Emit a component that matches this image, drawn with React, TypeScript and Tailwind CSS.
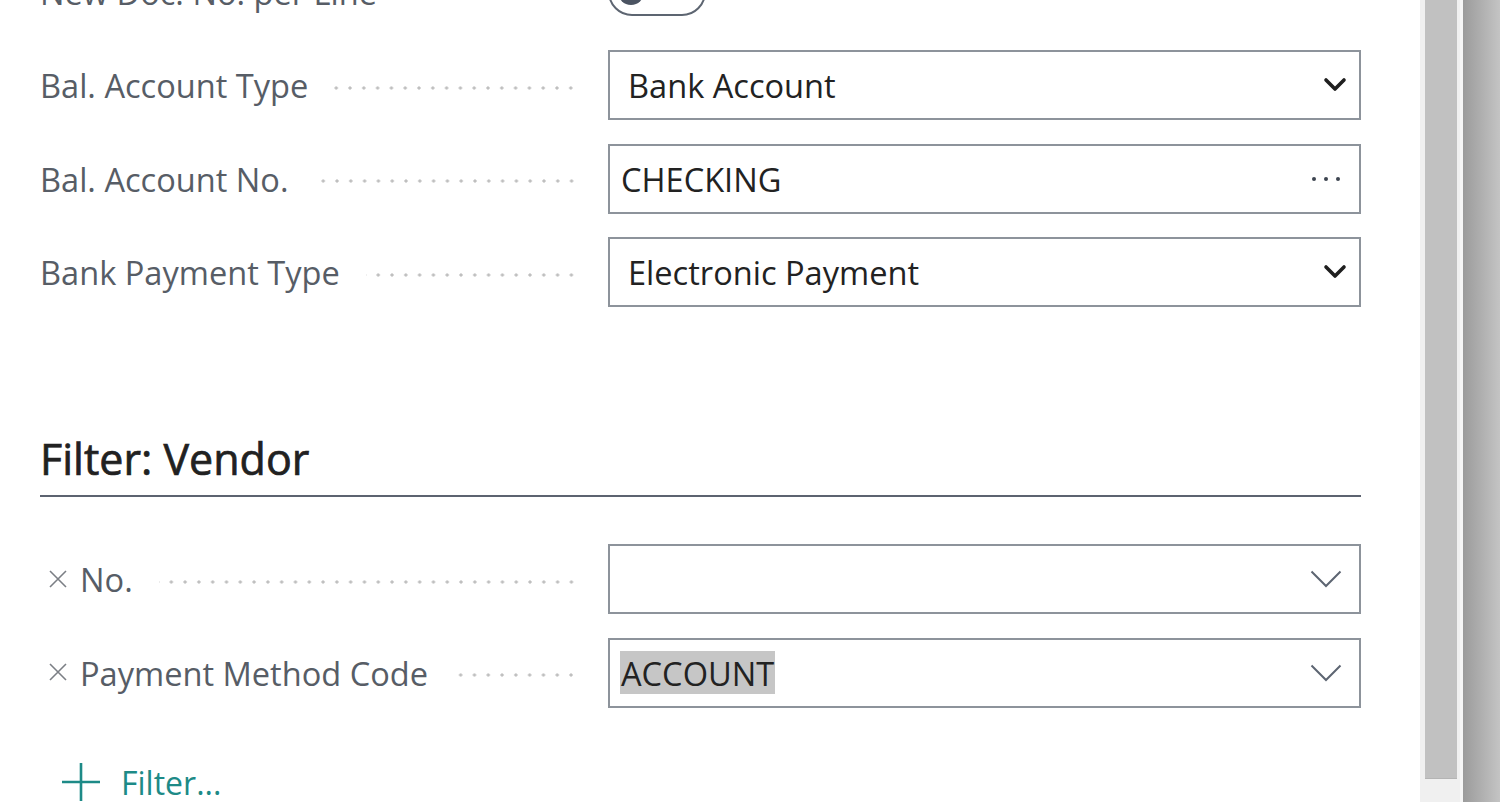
import React from "react";

function Leader() {
  return (
    <div className="ml-[26px] mt-[6px] h-[4px] flex-1 bg-[radial-gradient(circle,#bfbfbf_1.4px,transparent_1.8px)] bg-[length:13.8px_4px] bg-[position:right_center] bg-repeat-x" />
  );
}

function XIcon() {
  return (
    <span className="flex w-[40px] shrink-0 items-center pl-[8px]">
      <svg width="20" height="20" viewBox="0 0 20 20">
        <path d="M2 2 L18 18 M18 2 L2 18" stroke="#7b7f85" strokeWidth="1.6" fill="none" />
      </svg>
    </span>
  );
}

function Row({
  label,
  x,
  children,
}: {
  label: string;
  x?: boolean;
  children: React.ReactNode;
}) {
  return (
    <div className="flex h-[70px] items-center">
      <div className="flex w-[538px] items-center">
        {x && <XIcon />}
        <span className="whitespace-nowrap pt-[3px] text-[32.6px] text-[#575d66]">{label}</span>
        <Leader />
      </div>
      <div className="ml-[30px] flex h-full flex-1 items-center">{children}</div>
    </div>
  );
}

function BoldChevron() {
  return (
    <svg width="24" height="16" viewBox="0 0 24 16" className="mr-[12px] shrink-0">
      <polyline points="3,3 12,12 21,3" stroke="#1f1f1f" strokeWidth="3.6" fill="none" strokeLinecap="round" strokeLinejoin="round" />
    </svg>
  );
}

function ThinChevron() {
  return (
    <svg width="32" height="18" viewBox="0 0 32 18" className="mr-[17px] shrink-0">
      <polyline points="1.5,1.5 16,16 30.5,1.5" stroke="#5d6572" strokeWidth="2" fill="none" />
    </svg>
  );
}

function Box({ children, className = "" }: { children: React.ReactNode; className?: string }) {
  return (
    <div className={"flex h-[70px] w-full items-center justify-between border-2 border-[#8d939b] bg-white " + className}>
      {children}
    </div>
  );
}

export default function App() {
  return (
    <div className="flex h-[802px] w-[1500px] overflow-hidden bg-white font-['Open_Sans',sans-serif]">
      <div className="flex-1 pl-[40px] pr-[59px]">
        <div className="-mt-[43.5px] flex flex-col gap-[23.5px]">
          <Row label="New Doc. No. per Line">
            <div className="flex h-[48px] w-[98px] items-center rounded-full border-[2.5px] border-[#5d6571] px-[8px]">
              <div className="h-[26px] w-[26px] rounded-full bg-[#4b5462]" />
            </div>
          </Row>
          <Row label="Bal. Account Type">
            <Box>
              <span className="pl-[18px] pt-[3px] text-[32.6px] text-[#222]">Bank Account</span>
              <BoldChevron />
            </Box>
          </Row>
          <Row label="Bal. Account No.">
            <Box>
              <span className="pl-[11px] pt-[3px] text-[32.6px] text-[#222]">CHECKING</span>
              <span className="mr-[19px] flex gap-[8px]">
                <span className="h-[4px] w-[4px] rounded-full bg-[#3d4450]" />
                <span className="h-[4px] w-[4px] rounded-full bg-[#3d4450]" />
                <span className="h-[4px] w-[4px] rounded-full bg-[#3d4450]" />
              </span>
            </Box>
          </Row>
          <Row label="Bank Payment Type">
            <Box>
              <span className="pl-[18px] pt-[3px] text-[32.6px] text-[#222]">Electronic Payment</span>
              <BoldChevron />
            </Box>
          </Row>
        </div>

        <div className="mt-[122px] border-b-2 border-[#5c6370] pb-[6px]">
          <h2 className="h-[60px] text-[43px] font-normal leading-[60px] text-[#212121] [-webkit-text-stroke:0.7px_#212121]">Filter: Vendor</h2>
        </div>

        <div className="mt-[47px] flex flex-col gap-[23.5px]">
          <Row label="No." x>
            <Box>
              <span />
              <ThinChevron />
            </Box>
          </Row>
          <Row label="Payment Method Code" x>
            <Box>
              <span className="ml-[10px] bg-[#c6c6c6] px-[1px] pt-[3px] text-[32.6px] leading-[40px] text-[#222]">ACCOUNT</span>
              <ThinChevron />
            </Box>
          </Row>
        </div>

        <div className="mt-[39px] flex h-[70px] items-center pl-[22px] text-[#1d8a87]">
          <svg width="38" height="38" viewBox="0 0 38 38" className="shrink-0">
            <path d="M19 0 V38 M0 19 H38" stroke="#1d8a87" strokeWidth="2.6" fill="none" />
          </svg>
          <span className="ml-[21px] pt-[2px] text-[32px]">Filter...</span>
        </div>
      </div>

      <div className="flex h-full w-[80px] shrink-0">
        <div className="flex w-[40px] flex-col bg-[#f0f0f0] pl-[5px] pr-[3px]">
          <div className="h-[779px] border-b border-[#b4b4b4] bg-[#c1c1c1]" />
        </div>
        <div className="w-[3px] bg-[#f6f6f6]" />
        <div className="flex-1 bg-gradient-to-r from-[#9b9b9b] to-[#c4c4c4]" />
      </div>
    </div>
  );
}
